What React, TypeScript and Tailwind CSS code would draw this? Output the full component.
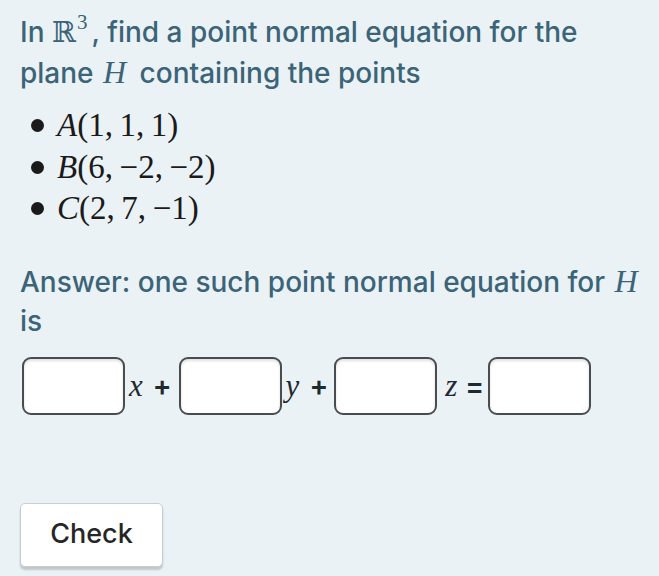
import React from "react";

const points = [
  { name: "A", coords: "(1,\u20091,\u20091)" },
  { name: "B", coords: "(6,\u2009\u22122,\u2009\u22122)" },
  { name: "C", coords: "(2,\u20097,\u2009\u22121)" },
];

function Blank() {
  return (
    <div className="w-[103px] h-[58px] shrink-0 rounded-[9px] border-2 border-[#4a4d50] bg-white shadow-[inset_0_2px_3px_rgba(0,0,0,0.12)]" />
  );
}

function Var({ children }: { children: React.ReactNode }) {
  return (
    <span className="font-['Liberation_Serif',serif] italic text-[31px] leading-none">{children}</span>
  );
}

export default function App() {
  return (
    <div className="w-[659px] h-[576px] bg-[#ebf2f6] overflow-hidden pl-5 pr-[10px] pt-[12px] font-['Inter',sans-serif]">
      {/* Question */}
      <p className="text-[28px] font-medium leading-[40px] text-[#3b6478] pr-[30px]">
        In{" "}
        <span className="font-['DejaVu_Serif',serif] font-normal text-[29px]">ℝ</span>
        <sup className="font-['Liberation_Serif',serif] font-normal text-[21px] relative -top-[13px] ml-[1px] mr-[4px]">3</sup>, find a point normal
        equation for the plane{" "}
        <span className="font-['Liberation_Serif',serif] font-normal italic text-[32px] ml-[2px] mr-[6px]">H</span> containing the
        points
      </p>

      {/* Points */}
      <ul className="mt-[12px] flex flex-col font-['Liberation_Serif',serif] text-[33px] leading-[41.5px] text-[#1a1a1a]">
        {points.map((p) => (
          <li key={p.name} className="flex items-center">
            <span className="w-[13px] h-[13px] rounded-full bg-[#1a1a1a] ml-[11px] mr-[13px]" />
            <span>
              <span className="italic">{p.name}</span>
              {p.coords}
            </span>
          </li>
        ))}
      </ul>

      {/* Answer */}
      <p className="mt-[32px] text-[28px] font-medium leading-[39px] text-[#3b6478]">
        Answer: one such point normal equation for{" "}
        <span className="font-['Liberation_Serif',serif] font-normal italic text-[32px] ml-[2px]">H</span> is
      </p>

      <div className="mt-[16px] ml-[2px] flex items-center text-[#1f2a30]">
        <Blank />
        <span className="ml-[4px]">
          <Var>x</Var>
        </span>
        <span className="text-[28px] font-semibold ml-[10px] mr-[7px] leading-none">+</span>
        <Blank />
        <span className="ml-[4px]">
          <Var>y</Var>
        </span>
        <span className="text-[28px] font-semibold ml-[10px] mr-[6px] leading-none">+</span>
        <Blank />
        <span className="ml-[8px]">
          <Var>z</Var>
        </span>
        <span className="text-[28px] font-semibold ml-[8px] mr-[4px] leading-none">=</span>
        <Blank />
      </div>

      <button className="mt-[88px] w-[143px] h-[64px] rounded-[5px] border border-[#c9cdd0] bg-white shadow-[0_3px_2px_rgba(0,0,0,0.18)] text-[27px] font-medium text-[#262626]">
        Check
      </button>
    </div>
  );
}
